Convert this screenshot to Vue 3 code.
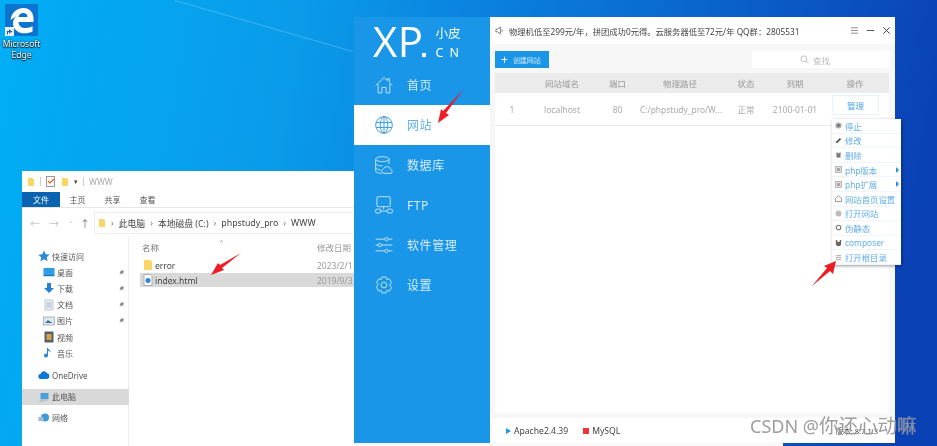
<script setup>
const quickItems = [
  { name: '桌面', icon: 'desk' },
  { name: '下载', icon: 'down' },
  { name: '文档', icon: 'doc' },
  { name: '图片', icon: 'pic' },
  { name: '视频', icon: 'video' },
  { name: '音乐', icon: 'music' },
]

const menuItems = [
  { name: '首页', icon: 'home' },
  { name: '网站', icon: 'globe', active: true },
  { name: '数据库', icon: 'db' },
  { name: 'FTP', icon: 'ftp' },
  { name: '软件管理', icon: 'sliders' },
  { name: '设置', icon: 'gear' },
]

const columns = ['', '网站域名', '端口', '物理路径', '状态', '到期', '操作']

const actions = [
  { name: '停止', icon: 'stop' },
  { name: '修改', icon: 'edit' },
  { name: '删除', icon: 'trash' },
  { name: 'php版本', icon: 'box', more: true },
  { name: 'php扩展', icon: 'box', more: true },
  { name: '网站首页设置', icon: 'house' },
  { name: '打开网站', icon: 'dot' },
  { name: '伪静态', icon: 'ring' },
  { name: 'composer', icon: 'comp' },
  { name: '打开根目录', icon: 'list' },
]
</script>

<template>
  <div class="desktop">
    <div class="ray"></div>

    <div class="edge-shortcut">
      <div class="edge-tile">
        <svg viewBox="0 0 32 32" width="33" height="32">
          <path d="M5 16C6 8 12 4 18 4c6 0 10 4 10 11v3H13c.3 4 3 6 7 6 3 0 5.500-.8 7-2v5.500c-2 1.200-5 1.800-8 1.800-6 0-11-3.500-11.500-9.300-.2-3 1-6 3.500-8-1.500 1-4.500 3-6 4zm8-3h9c0-2.500-1.600-4-4.300-4-2.500 0-4.200 1.500-4.700 4z" fill="#fff"/>
        </svg>
        <span class="shortcut-mark">
          <svg viewBox="0 0 9 9" width="9" height="9"><path d="M2 7.500V4h2V2.500L7.500 4.500 4 6.500V5H3v2.500z" fill="#1d5fa8"/></svg>
        </span>
      </div>
      <div class="edge-label">Microsoft<br>Edge</div>
    </div>

    <section class="explorer">
      <header class="ex-title">
        <svg class="folder-mini" viewBox="0 0 8 10"><path d="M1 1h4l2 1v7H1z" fill="#fbd568"/></svg>
        <i class="bar"></i>
        <svg class="check" viewBox="0 0 10 11"><rect x=".5" y=".5" width="8" height="10" fill="#fff" stroke="#999"/><path d="M2 5l2 2 4-4" fill="none" stroke="#e0662c" stroke-width="1.200"/></svg>
        <svg class="folder-mini" viewBox="0 0 8 10"><path d="M1 1h4l2 1v7H1z" fill="#fbd568"/></svg>
        <span class="caret">▾</span>
        <i class="bar"></i>
        <span class="ex-name">WWW</span>
      </header>
      <nav class="ex-tabs">
        <span class="file-tab">文件</span>
        <span>主页</span>
        <span>共享</span>
        <span>查看</span>
      </nav>
      <div class="ex-address">
        <span class="nav-arrows">
          <span>←</span><span>→</span><span class="small">⌄</span><span class="up">↑</span>
        </span>
        <div class="crumbs">
          <svg class="folder-mini" viewBox="0 0 8 10"><path d="M1 1h4l2 1v7H1z" fill="#fbd568"/></svg>
          <b>›</b><span>此电脑</span><b>›</b><span>本地磁盘 (C:)</span><b>›</b><span>phpstudy_pro</span><b>›</b><span>WWW</span>
        </div>
      </div>
      <div class="ex-body">
        <aside class="ex-side">
          <div class="side-row head">
            <svg viewBox="0 0 12 12"><path d="M6 .5l1.700 3.700 4 .4-3 2.700.9 4L6 9.300 2.400 11.400l.9-4-3-2.700 4-.4z" fill="#2b88d8"/></svg>
            快速访问
          </div>
          <div v-for="item in quickItems" :key="item.name" class="side-row sub">
            <svg viewBox="0 0 12 12">
              <template v-if="item.icon === 'desk'"><rect x=".5" y="2" width="11" height="7" fill="#2f9ee8"/><rect x=".5" y="9" width="11" height="1.200" fill="#1e6fb8"/></template>
              <path v-else-if="item.icon === 'down'" d="M4 1h4v5h3L6 11 1 6h3z" fill="#2b7fd4"/>
              <template v-else-if="item.icon === 'doc'"><rect x="2" y="1" width="8" height="10" fill="#e8eef2" stroke="#9fb0bd" stroke-width=".6"/><path d="M3.500 4h5M3.500 6h5M3.500 8h5" stroke="#8aa7bf" stroke-width=".7"/></template>
              <template v-else-if="item.icon === 'pic'"><rect x=".5" y="2" width="11" height="8" fill="#dfe9f1" stroke="#7b8b99" stroke-width=".6"/><path d="M2 8l3-3 2 1.500L10 8z" fill="#3f6f91"/></template>
              <template v-else-if="item.icon === 'video'"><rect x="1.500" y=".5" width="9" height="11" fill="#50606e"/><rect x="3.500" y="3" width="5" height="6" fill="#d9a040"/></template>
              <path v-else d="M5 1v7.500a2 2 0 1 1-1-1.700V1h1c.5 2 3 2.500 3 5-.8-1.500-2-2-3-2.200z" fill="#2b88d8"/>
            </svg>
            {{ item.name }}
            <svg v-if="item.icon !== 'video' && item.icon !== 'music'" class="pin" viewBox="0 0 8 8"><path d="M4.500 .8l2.700 2.700-1 .5-1.200 1.800L3.600 5.400 1.200 7.300 3 4.900 1.700 3.500l1.800-1.200z" fill="#8d8d8d"/></svg>
          </div>
          <div class="side-row head drive">
            <svg viewBox="0 0 12 12"><path d="M3 10a2.500 2.500 0 0 1-.4-5A3.400 3.400 0 0 1 9 4.300 2.900 2.900 0 0 1 9.200 10z" fill="#0f78d4"/></svg>
            OneDrive
          </div>
          <div class="side-row head pc">
            <svg viewBox="0 0 12 12"><rect x="2.500" y="2" width="8" height="6" fill="#4aa0dc"/><path d="M1 10l2-2h7v1.500l-7 1.500z" fill="#b9c3cb"/></svg>
            此电脑
          </div>
          <div class="side-row head net">
            <svg viewBox="0 0 12 12"><circle cx="7" cy="5.500" r="4" fill="#3f9ad9"/><rect x=".5" y="5" width="5" height="4" fill="#9fb9cc"/></svg>
            网络
          </div>
        </aside>
        <div class="ex-files">
          <span class="sort-mark">⌃</span>
          <div class="file-head">
            <span class="f-name">名称</span>
            <span class="f-date">修改日期</span>
          </div>
          <div class="file-row">
            <svg class="f-icon" viewBox="0 0 10 12"><path d="M1 1h5l3 1v9H1z" fill="#fbd568"/></svg>
            <span class="f-name">error</span>
            <span class="f-date">2023/2/1</span>
          </div>
          <div class="file-row selected">
            <svg class="f-icon" viewBox="0 0 10 12"><path d="M1 .5h6l2 2v9H1z" fill="#fff" stroke="#8e9aa3" stroke-width=".7"/><circle cx="5" cy="6.500" r="2.500" fill="#2b88d8"/></svg>
            <span class="f-name">index.html</span>
            <span class="f-date">2019/9/3</span>
          </div>
        </div>
      </div>
    </section>

    <section class="studio">
      <aside class="studio-side">
        <div class="logo">
          <span class="logo-xp">XP</span><i class="logo-dot"></i>
          <span class="logo-sub"><span>小皮</span><span class="cn">CN</span></span>
        </div>
        <div v-for="item in menuItems" :key="item.name" class="menu-item" :class="{ active: item.active }">
          <svg viewBox="0 0 24 24" width="20" height="20" fill="none" stroke="currentColor" stroke-width="1.200">
            <template v-if="item.icon === 'home'">
              <path d="M2 12.500L12 3l4 3.800V4.500h2.500v4.700L22 12.500M5 11v10.500h4.500V15h5v6.500H19V11"/>
            </template>
            <template v-else-if="item.icon === 'globe'">
              <circle cx="12" cy="12" r="10"/><ellipse cx="12" cy="12" rx="4.500" ry="10"/><path d="M12 2v20M2.500 9h19M2.500 15h19"/>
            </template>
            <template v-else-if="item.icon === 'db'">
              <ellipse cx="10" cy="5" rx="8" ry="3"/><path d="M2 5v14c0 1.800 3 3 7 3M18 5v6M2 10c0 1.800 3.500 3 8 3M2 15c0 1.500 2.500 2.700 6 3"/><path d="M11 22a3 3 0 0 1 .5-5.500 4.500 4.500 0 0 1 8.500 1 2.400 2.400 0 0 1 .5 4.500z"/>
            </template>
            <template v-else-if="item.icon === 'ftp'">
              <rect x="3.500" y="2" width="16" height="12" rx="1.500"/><path d="M11.500 14v3"/><rect x="2" y="17" width="6" height="4.500" rx="1"/><rect x="16" y="17" width="6" height="4.500" rx="1"/><path d="M8 19.200h8"/>
            </template>
            <template v-else-if="item.icon === 'sliders'">
              <path d="M2 5h11M17 5h5M2 12h3M9 12h13M2 19h11M17 19h5"/><circle cx="15" cy="5" r="2"/><circle cx="7" cy="12" r="2"/><circle cx="15" cy="19" r="2"/>
            </template>
            <template v-else>
              <path d="M9.500 2.500h5l1 3 3-.8 2.500 4.300-2.200 3 2.200 3-2.500 4.300-3-.8-1 3h-5l-1-3-3 .8L3 14l2.200-3L3 9l2.500-4.300 3 .8z"/><circle cx="12" cy="12" r="3.500"/>
            </template>
          </svg>
          <span>{{ item.name }}</span>
        </div>
      </aside>

      <div class="studio-main">
        <header class="notice">
          <svg class="speaker" viewBox="0 0 10 10"><path d="M1 3.500h2L6 1v8L3 6.500H1zM7.500 3.500c.8 1 .8 2 0 3" fill="none" stroke="#555" stroke-width=".8"/></svg>
          <span class="notice-text">物理机低至299元/年，拼团成功0元得。云服务器低至72元/年 QQ群：2805531</span>
          <span class="win-btns">
            <svg viewBox="0 0 10 10"><path d="M1 2h8M1 5h8M1 8h8" stroke="#666" stroke-width=".8"/></svg>
            <svg viewBox="0 0 10 10"><path d="M1 5h8" stroke="#444" stroke-width="1"/></svg>
            <svg viewBox="0 0 10 10"><path d="M1.500 1.500l7 7M8.500 1.500l-7 7" stroke="#444" stroke-width="1.100"/></svg>
          </span>
        </header>

        <div class="content">
          <div class="toolbar">
            <button class="create-btn"><span class="plus">+</span>创建网站</button>
            <div class="search">
              <svg viewBox="0 0 10 10"><circle cx="4.300" cy="4.300" r="3.300" fill="none" stroke="#bbb"/><path d="M6.800 6.800L9.500 9.500" stroke="#bbb"/></svg>
              查找
            </div>
          </div>
          <div class="panel">
            <div class="grid-row table-head">
              <span v-for="c in columns" :key="c">{{ c }}</span>
            </div>
            <div class="grid-row table-row">
              <span>1</span>
              <span>localhost</span>
              <span>80</span>
              <span>C:/phpstudy_pro/W...</span>
              <span>正常</span>
              <span>2100-01-01</span>
              <span class="manage-cell"><span class="manage">管理</span></span>
            </div>
          </div>
        </div>

        <footer class="status-bar">
          <span class="svc"><i class="run"></i>Apache2.4.39</span>
          <span class="svc"><i class="halt"></i>MySQL</span>
          <span class="version">版本: 8.7.1.3</span>
        </footer>
      </div>
    </section>

    <div class="bottom-strip"></div>

    <ul class="action-menu">
      <li v-for="a in actions" :key="a.name">
        <svg viewBox="0 0 8 8" width="7" height="7">
          <template v-if="a.icon === 'stop'"><circle cx="4" cy="4" r="3.500" fill="#aaa"/><circle cx="4" cy="4" r="1.300" fill="#555"/></template>
          <path v-else-if="a.icon === 'edit'" d="M1 7l.5-2L5.500 1 7 2.500 3 6.500z" fill="#555"/>
          <path v-else-if="a.icon === 'trash'" d="M1 2h6v1H1zM1.700 3.300h4.600V7.500H1.700z" fill="#777"/>
          <template v-else-if="a.icon === 'box'"><rect x=".5" y=".5" width="7" height="7" fill="#ddd" stroke="#999" stroke-width=".7"/><rect x="2.500" y="2.500" width="3" height="3" fill="#999"/></template>
          <path v-else-if="a.icon === 'house'" d="M4 .8L7.500 4v3.500h-7V4z" fill="none" stroke="#888"/>
          <circle v-else-if="a.icon === 'dot'" cx="4" cy="4" r="3.300" fill="#bbb"/>
          <circle v-else-if="a.icon === 'ring'" cx="4" cy="4" r="2.600" fill="none" stroke="#777" stroke-width="1.300"/>
          <path v-else-if="a.icon === 'comp'" d="M1 1h1.500v2h3V1H7v4a3 3 0 0 1-6 0z" fill="#666"/>
          <path v-else d="M1 1h6v1.500H1zM1 3.300h6v1.500H1zM1 5.600h6v1.500H1z" fill="#bbb"/>
        </svg>
        <span>{{ a.name }}</span>
        <i v-if="a.more" class="more"></i>
      </li>
    </ul>

    <svg class="arrows" viewBox="0 0 937 446" width="937" height="446">
      <path d="M241 253L222 268L224 270L211 275L218 263L220 265z" fill="#ee1c25"/>
      <path d="M464 89L446 113L449 115L438 123L441 109L443 111z" fill="#ee1c25"/>
      <path d="M812 286L827 268L824 266L836 261L833 274L830 271z" fill="#ee1c25"/>
    </svg>

    <div class="watermark">CSDN @<span class="wm-name">你还心动嘛</span></div>
  </div>
</template>

<style>
html, body {
  margin: 0;
  background: #0a45b5;
}
</style>

<style scoped>
.desktop {
  position: relative;
  width: 937px;
  height: 446px;
  overflow: hidden;
  font-family: "Noto Sans", "Noto Sans CJK SC", sans-serif;
  background: linear-gradient(100deg, #00aef5 0, #0a9be9 30%, #0a85e0 45%, #0a6fd2 62%, #0a55c4 80%, #0a42b6 94%);
  filter: blur(0.35px);
}

.ray {
  position: absolute;
  left: 175px;
  top: 0;
  width: 185px;
  height: 1px;
  background: rgba(255, 255, 255, 0.22);
  transform: rotate(16deg);
  transform-origin: left top;
}

.edge-shortcut {
  position: absolute;
  left: 0;
  top: 4px;
  width: 43px;
}

.edge-tile {
  position: relative;
  margin-left: 5px;
  width: 33px;
  height: 32px;
  background: #0b74cf;
}

.shortcut-mark {
  position: absolute;
  left: 0;
  bottom: 0;
  width: 9px;
  height: 9px;
  background: #e8eef4;
  display: flex;
}

.edge-label {
  margin-top: 2px;
  color: #fff;
  font-size: 8.5px;
  line-height: 11px;
  text-align: center;
  text-shadow: 0 0 2px #000, 0 1px 1px #000;
}

/* explorer */
.explorer {
  position: absolute;
  left: 22px;
  top: 171px;
  width: 333px;
  height: 275px;
  background: #fff;
  color: #333;
  font-size: 8px;
  display: flex;
  flex-direction: column;
}

.ex-title {
  height: 21px;
  flex: none;
  display: flex;
  align-items: center;
  gap: 5px;
  padding-left: 5px;
}

.folder-mini {
  width: 8px;
  height: 10px;
  flex: none;
}

.bar {
  width: 1px;
  height: 9px;
  background: #ccc;
}

.check {
  width: 10px;
  height: 11px;
}

.caret {
  font-size: 7px;
  color: #444;
}

.ex-name {
  color: #aaa;
  font-size: 8.5px;
}

.ex-tabs {
  height: 15px;
  flex: none;
  display: flex;
  align-items: center;
  border-bottom: 1px solid #e6e6e6;
  color: #555;
}

.ex-tabs span {
  width: 35px;
  text-align: center;
}

.ex-tabs .file-tab {
  width: 38px;
  height: 15px;
  line-height: 15px;
  background: #0963b0;
  color: #fff;
}

.ex-address {
  height: 26px;
  margin-top: 2px;
  flex: none;
  display: flex;
  align-items: center;
}

.nav-arrows {
  width: 72px;
  padding-left: 8px;
  box-sizing: border-box;
  display: flex;
  gap: 9px;
  color: #c4c4c4;
  font-size: 10px;
}

.nav-arrows .small {
  font-size: 7px;
}

.nav-arrows .up {
  color: #777;
  margin-left: -3px;
}

.crumbs {
  flex: 1;
  height: 20px;
  display: flex;
  align-items: center;
  gap: 4px;
  padding-left: 3px;
  border: 1px solid #ececec;
  border-right: none;
  color: #444;
  font-size: 8.8px;
}

.crumbs b {
  font-weight: 400;
  color: #777;
  padding: 0 1px;
}

.ex-body {
  flex: 1;
  display: flex;
}

.ex-side {
  width: 106px;
  padding-top: 12px;
  border-right: 1px solid #efefef;
  flex: none;
}

.side-row {
  position: relative;
  display: flex;
  align-items: center;
  gap: 2px;
  height: 16.200px;
  color: #555;
}

.side-row svg {
  width: 12px;
  height: 12px;
  flex: none;
}

.side-row.head {
  padding-left: 16px;
}

.side-row.sub {
  padding-left: 21px;
}

.side-row.sub svg:first-child {
  margin-right: 0;
}

.side-row .pin {
  position: absolute;
  left: 96px;
  width: 7px;
  height: 7px;
}

.side-row.drive {
  margin-top: 6px;
}

.side-row.pc {
  margin-top: 5px;
  background: #d9d9d9;
  margin-right: -1px;
}

.side-row.net {
  margin-top: 5px;
}

.ex-files {
  position: relative;
  flex: 1;
  padding-left: 11px;
  overflow: hidden;
}

.sort-mark {
  position: absolute;
  left: 89px;
  top: 1px;
  font-size: 8px;
  color: #999;
}

.file-head {
  display: flex;
  height: 21px;
  align-items: center;
  padding-top: 1px;
  margin-bottom: 1px;
  font-size: 8.5px;
  color: #777;
  box-sizing: border-box;
}

.file-head .f-name {
  padding-left: 2px;
  width: 175px;
}

.file-row {
  display: flex;
  align-items: center;
  height: 14.700px;
  font-size: 8.5px;
  color: #444;
}

.f-icon {
  width: 10px;
  height: 12px;
  margin: 0 2px 0 3px;
  flex: none;
}

.file-row .f-name {
  width: 162px;
  flex: none;
}

.f-date {
  color: #999;
  white-space: nowrap;
}

.file-row.selected {
  background: #d9d9d9;
}

/* phpstudy */
.studio {
  position: absolute;
  left: 354px;
  top: 17px;
  width: 541px;
  height: 426px;
  display: flex;
}

.studio-side {
  width: 136px;
  flex: none;
  background: #1a96e8;
  color: #e4f2fc;
}

.logo {
  height: 48px;
  display: flex;
  align-items: flex-start;
  color: #fff;
  padding-left: 19px;
}

.logo-xp {
  font-size: 42px;
  line-height: 48px;
  letter-spacing: 0.5px;
  font-family: "Open Sans", "Noto Sans", sans-serif;
}

.logo-dot {
  width: 4px;
  height: 4px;
  background: #fff;
  margin: 36px 0 0 -2px;
}

.logo-sub {
  display: flex;
  flex-direction: column;
  margin-left: 10px;
  padding-top: 7px;
  font-size: 12.5px;
  line-height: 19px;
}

.logo-sub .cn {
  letter-spacing: 6px;
}

.menu-item {
  height: 40px;
  display: flex;
  align-items: center;
  gap: 13px;
  padding-left: 20px;
  font-size: 12px;
  letter-spacing: 0.6px;
  color: #d8ecfb;
}

.menu-item svg {
  flex: none;
  color: #c2e1f8;
}

.menu-item.active {
  background: #fff;
  color: #62b0ec;
}

.menu-item.active svg {
  color: #3f9fe8;
}

.studio-main {
  flex: 1;
  display: flex;
  flex-direction: column;
  background: #f7f7f7;
  min-width: 0;
}

.notice {
  height: 27px;
  flex: none;
  background: #fff;
  display: flex;
  align-items: center;
  padding: 0 4px 0 5px;
  font-size: 8.3px;
  color: #444;
}

.speaker {
  width: 9px;
  height: 9px;
  margin-right: 5px;
}

.notice-text {
  flex: 1;
  white-space: nowrap;
}

.win-btns {
  display: flex;
  gap: 7px;
}

.win-btns svg {
  width: 9px;
  height: 9px;
}

.content {
  flex: 1;
  display: flex;
  flex-direction: column;
  padding: 7px 5px 5px;
  min-height: 0;
}

.toolbar {
  height: 17px;
  display: flex;
  justify-content: space-between;
  flex: none;
  margin-bottom: 5px;
}

.create-btn {
  width: 54px;
  height: 17px;
  padding: 0 0 0 6px;
  border: none;
  border-radius: 0;
  background: #1a96e8;
  color: #cfe8fa;
  font: inherit;
  font-size: 7px;
  display: flex;
  align-items: center;
  gap: 5px;
}

.plus {
  color: #fff;
  font-size: 12px;
  line-height: 12px;
}

.search {
  width: 138px;
  height: 17px;
  box-sizing: border-box;
  padding-right: 12px;
  background: #fff;
  color: #bbb;
  font-size: 8.5px;
  display: flex;
  align-items: center;
  justify-content: center;
  gap: 4px;
}

.search svg {
  width: 9px;
  height: 9px;
}

.panel {
  flex: 1;
  background: #fff;
  margin-right: 1px;
}

.grid-row {
  display: grid;
  grid-template-columns: 34px 66px 45px 80px 52px 46px 71px;
  align-items: center;
  text-align: center;
  font-size: 8.5px;
  white-space: nowrap;
}

.table-head {
  height: 20px;
  background: #ebebeb;
  color: #999;
}

.table-head span:last-child {
  padding-left: 3px;
}

.table-row {
  height: 33px;
  color: #aaa;
  border-bottom: 1px solid #eee;
  box-sizing: border-box;
}

.table-row > span:nth-child(4) {
  font-size: 8.4px;
}

.manage-cell {
  display: flex;
  justify-content: flex-end;
  padding-right: 10px;
}

.manage {
  width: 47px;
  height: 20px;
  line-height: 20px;
  margin-top: -8px;
  border: 1px solid #e6f3fc;
  box-sizing: border-box;
  color: #4aa4e8;
}

.status-bar {
  height: 25px;
  flex: none;
  background: #fff;
  display: flex;
  align-items: center;
  padding-left: 16px;
  gap: 15px;
  font-size: 8.6px;
  color: #444;
}

.svc {
  display: flex;
  align-items: center;
  gap: 3px;
}

.run {
  width: 0;
  height: 0;
  border-left: 5px solid #1a96e8;
  border-top: 3px solid transparent;
  border-bottom: 3px solid transparent;
}

.halt {
  width: 6px;
  height: 6px;
  background: #ee3333;
}

.version {
  margin-left: auto;
  margin-right: 17px;
  font-size: 7.5px;
}

.bottom-strip {
  position: absolute;
  left: 354px;
  top: 443px;
  width: 429px;
  height: 3px;
  background: #f9f9f9;
}

/* manage dropdown */
.action-menu {
  position: absolute;
  left: 832px;
  top: 119px;
  width: 69px;
  margin: 0;
  padding: 0;
  list-style: none;
  background: #fff;
  box-shadow: 1px 1px 3px rgba(0, 0, 0, 0.4);
}

.action-menu li {
  position: relative;
  height: 14.600px;
  display: flex;
  align-items: center;
  gap: 3px;
  padding-left: 3px;
  box-sizing: border-box;
  border-bottom: 1px solid #eef6fc;
  color: #62aeea;
  font-size: 8.4px;
  white-space: nowrap;
}

.more {
  position: absolute;
  right: 2px;
  border-left: 3px solid #2b8fe0;
  border-top: 3px solid transparent;
  border-bottom: 3px solid transparent;
}

.arrows {
  position: absolute;
  left: 0;
  top: 0;
  pointer-events: none;
}

.watermark {
  position: absolute;
  left: 750px;
  top: 413px;
  color: rgba(140, 140, 140, 0.85);
  font-size: 18px;
  line-height: 26px;
  white-space: nowrap;
  text-shadow: 0 0 1px rgba(255, 255, 255, 0.5);
}

.wm-name {
  font-size: 19.5px;
}
</style>
